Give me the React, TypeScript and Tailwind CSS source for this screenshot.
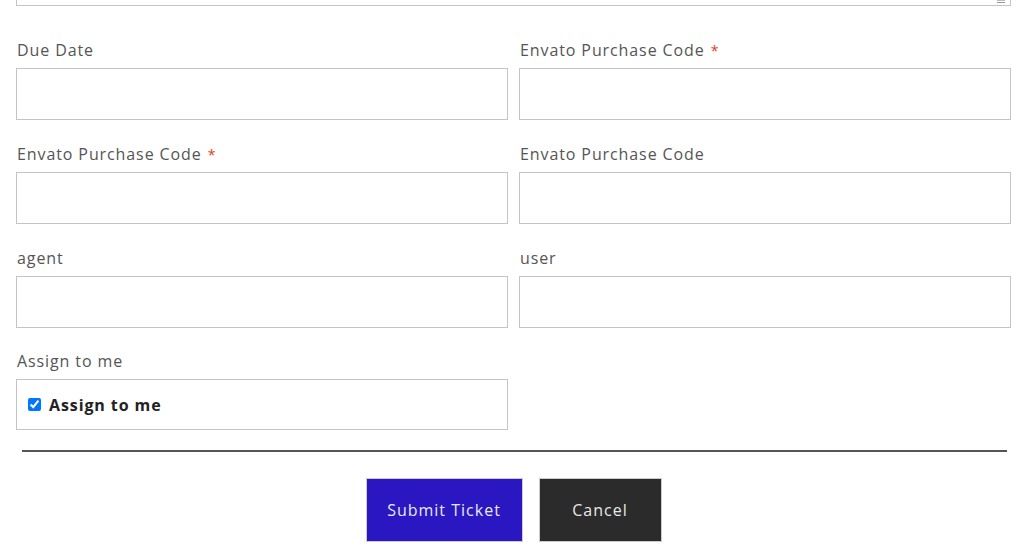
import React from "react";

const font = { fontFamily: '"Open Sans", "Noto Sans", sans-serif' };

function Label({ text, required }: { text: string; required?: boolean }) {
  return (
    <div className="h-[24px] leading-[24px] text-[16px] tracking-[0.9px] text-[#555] mb-[6px] pl-[1px]">
      {text}
      {required && <span className="text-[#e2401c] ml-[6px] text-[14px]">*</span>}
    </div>
  );
}

function Field({ text, required }: { text: string; required?: boolean }) {
  return (
    <div className="flex flex-col">
      <Label text={text} required={required} />
      <div className="h-[52px] border border-[#c4c4c4] bg-white" />
    </div>
  );
}

export default function App() {
  return (
    <div className="w-[1024px] h-[560px] bg-white overflow-hidden" style={font}>
      <div className="ml-[16px] w-[995px]">
        <div className="relative mt-[-40px] h-[46px] border border-[#c4c4c4]">
          <div className="absolute right-[5px] bottom-[2px] w-[8px] h-[1px] bg-[#999]" />
          <div className="absolute right-[5px] bottom-[4px] w-[8px] h-[1px] bg-[#bbb]" />
        </div>
        <div className="mt-[32px] grid grid-cols-2 gap-x-[11px] gap-y-[22px]">
          <Field text="Due Date" />
          <Field text="Envato Purchase Code" required />
          <Field text="Envato Purchase Code" required />
          <Field text="Envato Purchase Code" />
          <Field text="agent" />
          <Field text="user" />
          <div className="flex flex-col -mt-[1px]">
            <Label text="Assign to me" />
            <div className="h-[51px] border border-[#c4c4c4] flex items-center pl-[11px]">
              <input type="checkbox" defaultChecked className="w-[13px] h-[13px] m-0 accent-[#0075ff]" />
              <span className="ml-[8px] text-[16px] font-bold tracking-[0.9px] text-[#222]">Assign to me</span>
            </div>
          </div>
        </div>
        <div className="mt-[20px] ml-[6px] w-[985px] h-[2px] bg-[#555]" />
        <div className="mt-[26px] flex justify-center gap-[16px]">
          <button className="block w-[157px] h-[64px] bg-[#2a17c1] border border-[#ccc] text-[#e8e8f0] text-[16px] tracking-[1px]">
            Submit Ticket
          </button>
          <button className="block w-[123px] h-[64px] bg-[#2b2b2b] border border-[#ccc] text-[#e8e8e8] text-[16px] tracking-[1px]">
            Cancel
          </button>
        </div>
      </div>
    </div>
  );
}
